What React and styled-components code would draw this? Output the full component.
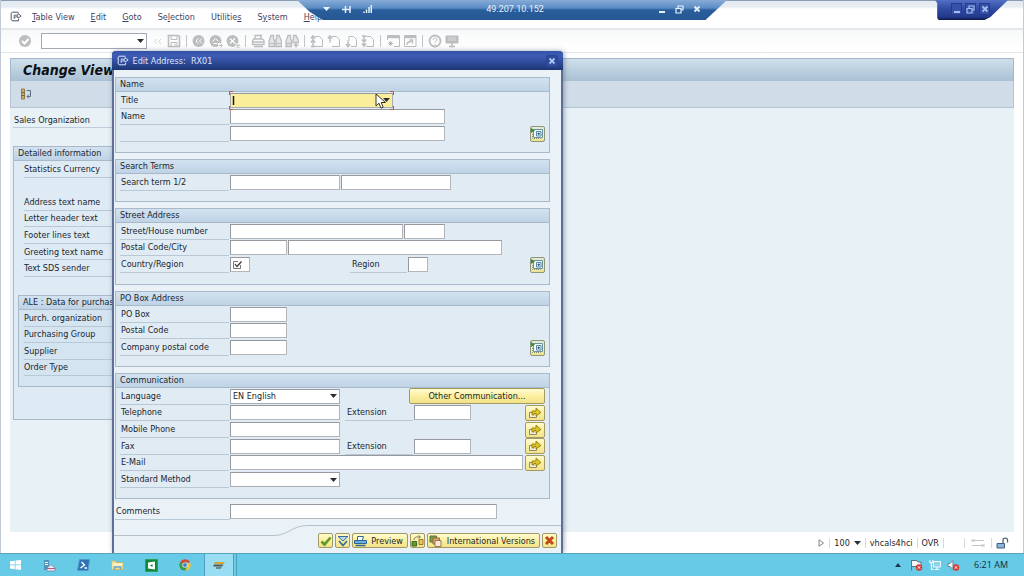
import React from "react";
import styled, { createGlobalStyle, css } from "styled-components";

const line = "#a9b9c9";
const ink = "#20262e";

const Global = createGlobalStyle`
  * { box-sizing: border-box; }
  body { margin: 0; background: #fff; }
  body, button, input, select {
    font-family: "DejaVu Sans Condensed", "DejaVu Sans", sans-serif;
    font-size: 9px;
    line-height: 12px;
    color: ${ink};
  }
  button { cursor: pointer; }
  svg { display: block; flex: none; }
`;

/* ---------- shell ---------- */
const Screen = styled.div`
  min-height: 100vh;
  display: flex;
  flex-direction: column;
`;
const Session = styled.div`
  position: relative;
  flex: 1;
  display: flex;
  flex-direction: column;
  overflow: hidden;
  border: solid #c3cbd6;
  border-width: 0 1px;
`;
const MenuBar = styled.nav`
  height: 30px;
  display: flex;
  align-items: center;
  gap: 16px;
  padding: 5px 9px 0;
  border-bottom: 2px solid #e3e9ea;
  background: linear-gradient(#8b9db3 0 1px, #e3e9f1 1px, #e8edf4 7px, #ffffff 9px);
`;
const MenuLink = styled.a`
  color: #3f4462;
  text-decoration: none;
`;
const MenuIcon = styled.button`
  display: flex;
  padding: 0;
  margin-right: -6px;
  border: 0;
  background: none;
`;
const ToolBar = styled.div`
  height: 23px;
  display: flex;
  align-items: center;
  gap: 3px;
  padding: 0 17px 1px;
  border-bottom: 1px solid #dfe5ea;
  background: linear-gradient(#f8f9fa, #ffffff);
`;
const ToolButton = styled.button`
  width: 14px;
  height: 14px;
  display: grid;
  place-items: center;
  padding: 0;
  border: 0;
  background: none;
  color: #bcbdbf;
`;
const ToolRule = styled.span`
  width: 1px;
  height: 12px;
  margin: 0 2px;
  background: #c2c5c9;
`;
const Command = styled.div`
  position: relative;
  width: 106px;
  margin: 0 0 0 6px;
`;
const CommandInput = styled.input`
  display: block;
  width: 100%;
  height: 16px;
  padding: 0 16px 0 3px;
  border: 1px solid #a3a9b2;
  background: #fff;
`;

/* ---------- background screen ---------- */
const View = styled.main`
  flex: 1;
  display: flex;
  flex-direction: column;
  margin: 5px 9px 0;
  background: #e8f1f5;
`;
const ViewTitle = styled.h1`
  height: 23px;
  margin: 0;
  padding-left: 12px;
  border: 1px solid #a3b8ca;
  border-bottom: 0;
  background: linear-gradient(#cfdfea, #a9c1d4);
  color: #0c1014;
  font-size: 14px;
  line-height: 22px;
  font-style: italic;
  font-weight: 700;
`;
const ViewTools = styled.div`
  height: 27px;
  display: flex;
  align-items: center;
  padding: 0 10px;
  border: 1px solid #b4c4d2;
  border-top: 0;
  background: #d0dce8;
`;
const ViewBody = styled.div`
  width: 420px;
  padding: 4px 3px;
`;
const ViewLabel = styled.div`
  display: flex;
  align-items: center;
  height: 16px;
  padding-left: 1px;
  border-bottom: 1px solid #bfcdd8;
`;
const DetailPanel = styled.section`
  min-height: 274px;
  margin-top: 18px;
  border: 1px solid ${line};
  background: #dfebf4;
`;
const AlePanel = styled.section`
  min-height: 92px;
  margin: 18px 5px 0 4px;
  border: 1px solid ${line};
  background: #d5e4f1;
`;

/* ---------- shared form parts ---------- */
const PanelTitle = styled.h2`
  height: 14px;
  margin: 0;
  padding: 0 4px;
  border-bottom: 1px solid ${line};
  background: linear-gradient(#d3e2f0, #bed3e6);
  font-size: 9px;
  line-height: 13px;
  font-weight: 400;
`;
const Rows = styled.div`
  display: grid;
  grid-auto-rows: 1fr;
  min-height: ${(p) => p.$height}px;
  padding: 0 4px;
`;
const Row = styled.div`
  display: flex;
  align-items: stretch;
  gap: 1px;
`;
const Label = styled.label`
  width: ${(p) => p.$width || 109}px;
  flex: none;
  display: flex;
  align-items: center;
  padding-left: ${(p) => (p.$width ? 2 : 1)}px;
  margin-left: ${(p) => p.$lead || 0}px;
  border-bottom: 1px solid #b9c8d5;
`;
const ViewField = styled.span`
  flex: 1;
  display: flex;
  align-items: center;
  margin-left: 6px;
  border-bottom: 1px solid #b9c8d5;
`;
const AleField = styled(ViewField)`
  margin-left: 1px;
`;
const Field = styled.input`
  width: ${(p) => p.$width}px;
  height: 15px;
  align-self: center;
  padding: 0 3px;
  border: 1px solid #b3b5ba;
  border-top-color: #96999f;
  border-left-color: #96999f;
  border-radius: 0;
  background: #fff;
`;
const Anchor = styled.div`
  position: relative;
  display: flex;
  align-items: center;
`;
const Picker = styled.select`
  width: ${(p) => p.$width}px;
  height: 15px;
  padding: 0 2px;
  appearance: none;
  border: 1px solid #a9abaf;
  border-top-color: #96999f;
  border-radius: 0;
  background: ${(p) => (p.$focused ? "#fbee9a" : "#fff")};
`;
const PickerArrow = styled.span`
  position: absolute;
  right: 3px;
  top: 0;
  bottom: 0;
  display: flex;
  align-items: center;
  pointer-events: none;
`;
const FieldMark = styled.span`
  position: absolute;
  left: 2px;
  pointer-events: none;
`;
const FocusFrame = styled.svg`
  position: absolute;
  left: -1px;
  top: -1px;
  pointer-events: none;
`;
const Pointer = styled.svg`
  position: absolute;
  left: 145px;
  top: 1px;
  z-index: 2;
  pointer-events: none;
`;

/* ---------- dialog ---------- */
const Dialog = styled.section`
  position: absolute;
  left: 111px;
  top: 51px;
  bottom: 0;
  width: 451px;
  display: flex;
  flex-direction: column;
  border: 2px solid #5d6f98;
  border-top: 0;
  border-bottom: 0;
  border-radius: 4px 4px 0 0;
  background: #eaf2f8;
  box-shadow: 1px 0 5px rgba(40, 60, 90, 0.45);
`;
const DialogBar = styled.header`
  height: 19px;
  flex: none;
  display: flex;
  align-items: center;
  gap: 1px;
  margin: 0 -2px;
  padding: 0 5px;
  border-radius: 4px 4px 0 0;
  background: linear-gradient(#3152a6, #3f5bb4 25%, #2f4b9c 60%, #1d3673);
  color: #dce6f7;
`;
const DialogName = styled.h2`
  flex: 1;
  margin: 0;
  font-size: 9px;
  font-weight: 400;
  white-space: pre;
`;
const CloseButton = styled.button`
  width: 12px;
  height: 12px;
  display: grid;
  place-items: center;
  padding: 0;
  border: 1px solid #2b4791;
  border-radius: 2px;
  background: #2f4b9b;
  color: #a9c3f5;
`;
const DialogBody = styled.div`
  flex: 1;
  display: flex;
  flex-direction: column;
  gap: 6px;
  padding: 7px 11px 0 1px;
`;
const Group = styled.fieldset`
  min-width: 0;
  min-height: ${(p) => p.$height}px;
  margin: 0;
  padding: 0;
  border: 1px solid ${line};
  background: #e0ebf3;
`;
const yellow = css`
  border: 1px solid #a39a63;
  border-radius: 2px;
  background: linear-gradient(#fffbd0, #fbefa0 50%, #f3e288);
`;
const MoreButton = styled.button`
  width: 15px;
  height: 16px;
  align-self: center;
  display: grid;
  place-items: center;
  margin-left: auto;
  padding: 0;
  border: 1px solid #8f9678;
  border-radius: 2px;
  background: linear-gradient(#dfe8d8, #eef0c4 60%, #efe28d);
`;
const DetailButton = styled.button`
  ${yellow}
  width: 20px;
  height: 16px;
  align-self: center;
  display: grid;
  place-items: center;
  margin-left: auto;
  padding: 0;
`;
const WideButton = styled.button`
  ${yellow}
  width: 136px;
  height: 16px;
  align-self: center;
  margin-left: auto;
  padding: 0;
`;
const Comments = styled.div`
  display: flex;
  min-height: 17px;
  margin-top: -2px;
`;
const CommentsLabel = styled(Label)`
  width: 115px;
  padding-left: 1px;
`;
const DialogFooter = styled.footer`
  position: relative;
  display: flex;
  justify-content: flex-end;
  align-items: flex-end;
  gap: 2px;
  height: 32px;
  padding: 0 4px 5px;
`;
const FooterCurve = styled.svg`
  position: absolute;
  left: 0;
  top: 4px;
  width: 100%;
  height: 12px;
`;
const FootButton = styled.button`
  ${yellow}
  position: relative;
  height: 15px;
  display: flex;
  align-items: center;
  justify-content: center;
  gap: 4px;
  padding: 0 ${(p) => (p.$text ? 4 : 0)}px 0 ${(p) => (p.$text ? 1 : 0)}px;
  min-width: 15px;
`;

/* ---------- overlays ---------- */
const RemoteBar = styled.div`
  position: absolute;
  top: 0;
  left: 50%;
  transform: translateX(-50%);
  width: 430px;
  height: 20px;
  display: flex;
  align-items: center;
  justify-content: space-between;
  padding: 0 26px 2px;
  background: linear-gradient(#86abd6, #5a8cc4 40%, #2a5e9c 50%, #255792);
  clip-path: polygon(0 0, 100% 0, 95% 100%, 6% 100%, 3% 60%);
  color: #e6f0fb;
`;
const RemoteHost = styled.span`
  font-family: Roboto, sans-serif;
`;
const RemoteSet = styled.div`
  display: flex;
  align-items: center;
  gap: ${(p) => p.$gap}px;
`;
const BareButton = styled.button`
  display: flex;
  padding: 0;
  border: 0;
  background: none;
  color: inherit;
`;
const WindowTab = styled.div`
  position: absolute;
  top: 0;
  right: 15px;
  width: 73px;
  height: 20px;
  display: flex;
  gap: 3px;
  padding: 3px 0 0 16px;
  background: linear-gradient(#5470c4, #2f4ba2 45%, #24398a 85%, #0c1646);
  clip-path: polygon(0 0, 100% 0, 76% 85%, 68% 100%, 5% 100%, 3% 90%, 3% 15%);
  color: #a8bdee;
`;
const TabButton = styled.button`
  width: 11px;
  height: 12px;
  display: grid;
  place-items: center;
  padding: 0;
  border: 1px solid #243c8c;
  background: #3551a8;
  color: inherit;
`;

/* ---------- bottom bars ---------- */
const StatusBar = styled.footer`
  height: 21px;
  display: flex;
  align-items: center;
  justify-content: flex-end;
  gap: 4px;
  padding: 0 14px;
  background: #fff;
`;
const StatusRule = styled.span`
  width: 1px;
  height: 10px;
  margin-left: ${(p) => p.$lead || 0}px;
  background: #d5d9dd;
`;
const TaskBar = styled.footer`
  height: 23px;
  display: flex;
  gap: 4px;
  border-top: 1px solid #55a5bf;
  background: #67cbe8;
`;
const TaskButton = styled.button`
  width: 30px;
  display: grid;
  place-items: center;
  padding: 0;
  border: solid ${(p) => (p.$active ? "#4f9fbd" : "transparent")};
  border-width: 0 1px;
  background: ${(p) => (p.$active ? "#98ddf1" : "transparent")};
`;
const TaskEdge = styled.span`
  width: 1px;
  margin-left: -2px;
  background: #4f9fbd;
`;
const Tray = styled.div`
  margin-left: auto;
  display: flex;
  align-items: center;
  gap: 6px;
  padding-right: 16px;
  color: #0d2a3a;
`;
const TrayIcons = styled.div`
  display: flex;
  gap: 6px;
  margin-left: 3px;
`;
const Clock = styled.time`
  margin-left: 8px;
  font-family: "Open Sans", "Noto Sans", sans-serif;
  font-size: 9px;
`;

/* ---------- icons ---------- */
const Ic = ({ children, w = 14, h = 14, ...rest }) => (
  <svg width={w} height={h} viewBox={`0 0 ${w} ${h}`} fill="none" stroke="currentColor" aria-hidden="true" {...rest}>
    {children}
  </svg>
);
const Down = ({ color = "#2a2f36" }) => (
  <Ic w={7} h={4} stroke="none" fill={color}><path d="M0 0h7L3.5 4z" /></Ic>
);
const WindowIcon = ({ color }) => (
  <Ic w={12} h={11} stroke={color}>
    <path d="M8.500 1.200H2.200L1.200 2.200v6.600l1 1H8.500V8" />
    <path d="M4.200 7.500V4.200H8V2.500L11.200 5 8 7.200V5.800H5.500z" strokeWidth=".9" />
  </Ic>
);
const CloseX = () => <Ic w={8} h={8} strokeWidth="1.800"><path d="M1.500 1.500l5 5M6.500 1.500l-5 5" /></Ic>;
const RestoreIc = () => <Ic w={9} h={9} strokeWidth="1.200"><path d="M3 3V1h5v4H6M1 3.500h5V8H1z" /></Ic>;
const MinIc = () => <Ic w={8} h={9} strokeWidth="1.800"><path d="M1 7h6" /></Ic>;

const disc = <circle cx="6.500" cy="7" r="6" fill="currentColor" stroke="none" />;
const page = "M5 2.500H9.500L12.500 5.500V12.500H5";
const tools = {
  save: <><path d="M1.500 1.500h10l1 1v10h-11z" strokeWidth="1.600" /><path d="M4 2v3.500h6V2M4 12V8.500h6V12M8 9.500v2" /></>,
  back: <>{disc}<path d="M6.500 4.500L4 7l2.500 2.500M10 4.500L7.500 7 10 9.500" stroke="#fff" /></>,
  exit: <>{disc}<path d="M3.500 7.500L6.500 4.500l3 3M4.500 9.500h4" stroke="#fff" /><path d="M9 9h5v5H9z" fill="#fff" stroke="none" /><path d="M9.500 11.500h3.500M11.500 9.500l2 2-2 2" /></>,
  cancel: <>{disc}<path d="M4 4.500l5 5M9 4.500l-5 5" stroke="#fff" strokeWidth="1.300" /><path d="M9.500 9.500h4.500V14H9.500z" fill="#fff" stroke="none" /><path d="M10.500 10.500l3 3M13.500 10.500l-3 3" strokeWidth="1.400" /></>,
  print: <><path d="M4 5V1.500h6.500L9.500 5M1.500 10.500v-4l1.500-1.500h8.500l1.500 1.500v4z" strokeWidth="1.300" /><path d="M1.500 8h11.500M3 12.500h9" strokeWidth="1.300" /></>,
  find: <><path d="M3 1.500h2.500v3l1 2V12.500H1V7zM8.500 1.500H11l2.500 5.500v5.500H8V6.500l.5-2z" fill="currentColor" fillOpacity=".35" strokeWidth="1.300" /><path d="M6 6.500h2M1 9.500h5.500M8 9.500h5.500" /></>,
  findNext: <><path d="M3 1.500h2.500v3l1 2V12.500H1V7zM8.500 1.500H11l2.500 5v2H8v-2l.5-2z" fill="currentColor" fillOpacity=".35" strokeWidth="1.300" /><path d="M1 9.500h5.500M11 8.500v5M8.500 11h5" strokeWidth="1.600" /></>,
  first: <><path d={page} /><path d="M3 2v10.500M.8 4.500L3 2l2.200 2.500M.8 8.500L3 6l2.200 2.500M1 12.500h4" strokeWidth="1.500" /></>,
  prev: <><path d={page} /><path d="M3 8.500V2M.8 4.500L3 2l2.200 2.500" strokeWidth="1.500" /></>,
  next: <><path d="M5 7V2.500H9.500L12.500 5.500V12.500H7" /><path d="M4 6.500v6M1.800 10L4 12.500 6.200 10" strokeWidth="1.500" /></>,
  last: <><path d={page} /><path d="M3 1.500V12M.8 5.500L3 8l2.200-2.500M.8 9.500L3 12l2.200-2.500M1 2h4" strokeWidth="1.500" /></>,
  session: <><path d="M1.500 6V1.500h12v11H8" /><path d="M1.500 3h12" strokeWidth="2.400" /><path d="M4.500 7v5M2 9.500h5M2.800 7.800l3.400 3.400M6.200 7.800l-3.400 3.400" /></>,
  shortcut: <><path d="M1.500 1.500h11.500v11H1.500z" /><path d="M1.500 3h11.500" strokeWidth="2.400" /><path d="M4 11c0-3 1.500-3.500 4.500-3.500M6.500 6h3v3.500" strokeWidth="1.400" /></>,
  help: <><circle cx="7" cy="7" r="5.500" strokeWidth="1.800" /><path d="M5 5.800c0-2.300 4-2.300 4 0C9 7 7 7 7 8.500M7 9.800v1.200" /></>,
  layout: <><path d="M1 2h12v7H1z" fill="currentColor" /><path d="M3 4h8M3 6h8" stroke="#dcdcdc" /><path d="M7 9v3M4 12.500h6" strokeWidth="1.600" /></>,
};
const toolSets = [["save"], ["back", "exit", "cancel"], ["print", "find", "findNext"], ["first", "prev", "next", "last"], ["session", "shortcut"], ["help", "layout"]];

const MoreIc = () => (
  <Ic w={13} h={13}>
    <path d="M2.500 2.500h9v8h-9z" stroke="#6b959b" fill="#eef6f6" />
    <path d="M5.500 4.500h4.500v4.500H5.500z" stroke="#5b88ab" />
    <path d="M7.700 5.500v2.500M6.500 6.700h2.500" stroke="#2d5a84" />
    <path d="M0 1l4 2.500L0 6z" fill="#3f8a35" stroke="none" />
    <path d="M1.500 7v4.500h8" stroke="#7c8f74" strokeDasharray="1 1" />
  </Ic>
);
const DetailIc = () => (
  <Ic w={14} h={12}>
    <path d="M1.500 5.500h7v5h-7z" stroke="#8f8a6a" fill="#f3efd6" />
    <path d="M4 8V4h4V1l5 4.500L8 9V6.500H6V8z" stroke="#857512" strokeWidth=".8" fill="#dfc522" />
  </Ic>
);

/* ---------- pieces ---------- */
const DropDown = ({ id, width, value = "", focused, children }) => (
  <Anchor>
    <Picker id={id} $width={width} $focused={focused} defaultValue={value}>
      <option>{value}</option>
    </Picker>
    <PickerArrow><Down /></PickerArrow>
    {children}
  </Anchor>
);
const More = ({ name }) => <MoreButton type="button" aria-label={name}><MoreIc /></MoreButton>;
const Detail = ({ name }) => <DetailButton type="button" aria-label={name}><DetailIc /></DetailButton>;

const menus = ["Table View", "Edit", "Goto", "Selection", "Utilities", "System", "Help"];
const accel = [0, 0, 0, 2, 8, 1, 0];

const AddressDialog = () => (
  <Dialog aria-labelledby="dlg">
    <DialogBar>
      <WindowIcon color="#dce6f7" />
      <DialogName id="dlg">{" Edit Address:  RX01"}</DialogName>
      <CloseButton type="button" aria-label="Close"><CloseX /></CloseButton>
    </DialogBar>
    <DialogBody>
      <Group $height={76}>
        <PanelTitle>Name</PanelTitle>
        <Rows $height={50}>
          <Row>
            <Label htmlFor="title">Title</Label>
            <DropDown id="title" width={163} focused>
              <FocusFrame width="165" height="19" fill="none" stroke="#b5564c">
                <path d="M.5 4V.5H4M161 .5h3.500V4M.5 15v3.500H4M161 18.500h3.500V15" />
                <path d="M4.500 5v9" stroke="#1c1c1c" strokeWidth="1.500" />
              </FocusFrame>
              <Pointer width="12" height="17" viewBox="0 0 12 17">
                <path d="M1 1v12l3-2.800 2 5 2.200-1-2-4.700H10.500z" fill="#fff" stroke="#3a3428" />
              </Pointer>
            </DropDown>
          </Row>
          <Row>
            <Label htmlFor="name1">Name</Label>
            <Field id="name1" $width={215} />
          </Row>
          <Row>
            <Label htmlFor="name2" />
            <Field id="name2" aria-label="Name 2" $width={215} />
            <More name="More names" />
          </Row>
        </Rows>
      </Group>

      <Group $height={43}>
        <PanelTitle>Search Terms</PanelTitle>
        <Rows $height={17}>
          <Row>
            <Label htmlFor="term1">Search term 1/2</Label>
            <Field id="term1" $width={110} />
            <Field aria-label="Search term 2" $width={110} />
          </Row>
        </Rows>
      </Group>

      <Group $height={77}>
        <PanelTitle>Street Address</PanelTitle>
        <Rows $height={50}>
          <Row>
            <Label htmlFor="street">Street/House number</Label>
            <Field id="street" $width={173} />
            <Field aria-label="House number" $width={41} />
          </Row>
          <Row>
            <Label htmlFor="zip">Postal Code/City</Label>
            <Field id="zip" $width={57} />
            <Field aria-label="City" $width={214} />
          </Row>
          <Row>
            <Label htmlFor="country">Country/Region</Label>
            <Anchor>
              <Field id="country" $width={20} />
              <FieldMark>
                <Ic w={11} h={10}><path d="M8.500 5v3.500h-7v-7H6" stroke="#777" /><path d="M3 4l2 2.500L9.500 1.500" stroke="#333" strokeWidth="1.200" /></Ic>
              </FieldMark>
            </Anchor>
            <Label htmlFor="region" $width={57} $lead={99}>Region</Label>
            <Field id="region" $width={20} />
            <More name="More address fields" />
          </Row>
        </Rows>
      </Group>

      <Group $height={76}>
        <PanelTitle>PO Box Address</PanelTitle>
        <Rows $height={50}>
          <Row><Label htmlFor="pobox">PO Box</Label><Field id="pobox" $width={57} /></Row>
          <Row><Label htmlFor="pozip">Postal Code</Label><Field id="pozip" $width={57} /></Row>
          <Row>
            <Label htmlFor="cozip">Company postal code</Label>
            <Field id="cozip" $width={57} />
            <More name="More PO box fields" />
          </Row>
        </Rows>
      </Group>

      <Group $height={126}>
        <PanelTitle>Communication</PanelTitle>
        <Rows $height={100}>
          <Row>
            <Label htmlFor="lang">Language</Label>
            <DropDown id="lang" width={110} value="EN English" />
            <WideButton type="button">Other Communication...</WideButton>
          </Row>
          <Row>
            <Label htmlFor="tel">Telephone</Label>
            <Field id="tel" $width={110} />
            <Label htmlFor="telext" $width={68} $lead={4}>Extension</Label>
            <Field id="telext" $width={57} />
            <Detail name="More telephone numbers" />
          </Row>
          <Row>
            <Label htmlFor="mob">Mobile Phone</Label>
            <Field id="mob" $width={110} />
            <Detail name="More mobile numbers" />
          </Row>
          <Row>
            <Label htmlFor="fax">Fax</Label>
            <Field id="fax" $width={110} />
            <Label htmlFor="faxext" $width={68} $lead={4}>Extension</Label>
            <Field id="faxext" $width={57} />
            <Detail name="More fax numbers" />
          </Row>
          <Row>
            <Label htmlFor="mail">E-Mail</Label>
            <Field id="mail" $width={293} />
            <Detail name="More e-mail addresses" />
          </Row>
          <Row>
            <Label htmlFor="method">Standard Method</Label>
            <DropDown id="method" width={110} />
          </Row>
        </Rows>
      </Group>

      <Comments>
        <CommentsLabel htmlFor="comments">Comments</CommentsLabel>
        <Field id="comments" $width={267} />
      </Comments>
    </DialogBody>
    <DialogFooter>
      <FooterCurve viewBox="0 0 447 12" preserveAspectRatio="none" fill="none" stroke="#b5c1ca">
        <path d="M0 10.500H160C174 10.500 178 .5 194 .5H447" />
      </FooterCurve>
      <FootButton type="button" aria-label="Continue">
        <Ic w={12} h={12}><path d="M1.500 6.500L4.500 9.500 10.500 2.500" stroke="#5c9a2a" strokeWidth="2.600" /></Ic>
      </FootButton>
      <FootButton type="button" aria-label="Check">
        <Ic w={12} h={12} stroke="#3a6f9c" fill="#b4d8ec"><path d="M1 1.500h10L6 6z" /><path d="M2 6L6 10.500 10 6" fill="none" strokeWidth="1.800" /></Ic>
      </FootButton>
      <FootButton type="button" $text>
        <Ic w={13} h={12} stroke="#2f6797"><path d="M3.500 5V1.500h6L8.500 5" fill="#fff" /><path d="M.5 5.500h12v3H.5z" fill="#6bb0dc" /><path d="M1.500 10.500h10" strokeWidth="1.500" /></Ic>
        Preview
      </FootButton>
      <FootButton type="button" aria-label="Change relationships">
        <Ic w={13} h={12}><path d="M1 6.500h4.500v4.500H1z" fill="#5d9a2f" stroke="#3f6b22" /><path d="M8 4.500h4v5H8z" fill="#ecc76a" stroke="#9b7a2c" /><path d="M3 5c0-3 3-3.500 6-3M7.500.5l2 1.500-2 1.500" stroke="#77775a" /></Ic>
      </FootButton>
      <FootButton type="button" $text>
        <Ic w={14} h={12}><path d="M1 1h6.500v6H1z" fill="#7c9e4a" stroke="#55733a" /><path d="M4 3h6.500v6H4z" fill="#e0a86a" stroke="#9a6a3c" /><path d="M6 5.500h6v6H6z" fill="#f7ecd9" stroke="#a5764c" /></Ic>
        International Versions
      </FootButton>
      <FootButton type="button" aria-label="Cancel">
        <Ic w={11} h={11}><path d="M2 2l7 7M9 2L2 9" stroke="#bf4a1c" strokeWidth="3" /></Ic>
      </FootButton>
    </DialogFooter>
  </Dialog>
);

export default function App() {
  return (
    <Screen>
      <Global />
      <Session>
        <MenuBar>
          <MenuIcon type="button" aria-label="System menu"><WindowIcon color="#4c5468" /></MenuIcon>
          {menus.map((m, i) => (
            <MenuLink href="#" key={m}>
              {m.slice(0, accel[i])}<u>{m[accel[i]]}</u>{m.slice(accel[i] + 1)}
            </MenuLink>
          ))}
        </MenuBar>
        <ToolBar>
          <ToolButton type="button" aria-label="Enter">
            <Ic><circle cx="7" cy="7" r="6" fill="currentColor" stroke="none" /><path d="M4 7l2.500 2.500L10.500 5" stroke="#fff" strokeWidth="2" /></Ic>
          </ToolButton>
          <Command>
            <CommandInput aria-label="Command" />
            <PickerArrow><Down /></PickerArrow>
          </Command>
          <ToolButton type="button" aria-label="Collapse">
            <Ic><path d="M7 5L4.500 7.500 7 10M11 5L8.500 7.500 11 10" stroke="#d3d5d8" /></Ic>
          </ToolButton>
          {toolSets.map((set, i) => (
            <React.Fragment key={i}>
              {i > 0 && <ToolRule />}
              {set.map((t) => (
                <ToolButton type="button" key={t} aria-label={t}><Ic>{tools[t]}</Ic></ToolButton>
              ))}
            </React.Fragment>
          ))}
        </ToolBar>

        <View>
          <ViewTitle>Change View</ViewTitle>
          <ViewTools>
            <BareButton type="button" aria-label="Other view">
              <Ic w={11} h={12}><path d="M.5 1h3v10h-3z" fill="#d9a85a" stroke="#8b7a4c" /><path d="M.5 4.500h3M.5 7.500h3" stroke="#5c6b4c" /><path d="M5.500 2.500h4v6H6M8 6.500L6 8.500l2 2" stroke="#5c6f86" /></Ic>
            </BareButton>
          </ViewTools>
          <ViewBody>
            <ViewLabel>Sales Organization</ViewLabel>
            <DetailPanel>
              <PanelTitle>Detailed information</PanelTitle>
              <Rows $height={116}>
                {["Statistics Currency", null, "Address text name", "Letter header text", "Footer lines text", "Greeting text name", "Text SDS sender"].map((t, i) => (
                  <Row key={i}>{t && <ViewField>{t}</ViewField>}</Row>
                ))}
              </Rows>
              <AlePanel>
                <PanelTitle>ALE : Data for purchasing</PanelTitle>
                <Rows $height={66}>
                  {["Purch. organization", "Purchasing Group", "Supplier", "Order Type"].map((t) => (
                    <Row key={t}><AleField>{t}</AleField></Row>
                  ))}
                </Rows>
              </AlePanel>
            </DetailPanel>
          </ViewBody>
        </View>

        <StatusBar>
          <Ic w={7} h={8}><path d="M1 .8v6.400L5.500 4z" stroke="#7d858e" /></Ic>
          <StatusRule />
          <span>100</span>
          <Down />
          <StatusRule />
          <span>vhcals4hci</span>
          <StatusRule />
          <span>OVR</span>
          <StatusRule />
          <StatusRule $lead={16} />
          <Ic w={18} h={10}><path d="M3 1v3M3 2.500h12M5.500 1L4 2.500 5.500 4M3 7.500h12M15 6v3M12.500 6L14 7.500 12.500 9" stroke="#c3c7cb" /></Ic>
          <StatusRule />
          <Ic w={13} h={12}><path d="M1 6.500h7.500v4.500H1z" fill="#8db4d6" stroke="#3c5e84" /><path d="M7 6V3c0-2.500 4.500-2.500 4.500 0v2.500" stroke="#57636f" strokeWidth="1.300" /></Ic>
        </StatusBar>

        <AddressDialog />

        <RemoteBar>
          <RemoteSet $gap={12}>
            <BareButton type="button" aria-label="Menu"><Down color="#eef5fd" /></BareButton>
            <BareButton type="button" aria-label="Pin"><Ic w={9} h={9} strokeWidth="1.500"><path d="M0 4.500h3M3.500 1v7M8 1v7M3.500 4.500h4.500" /></Ic></BareButton>
            <Ic w={9} h={10} strokeWidth="1.500"><path d="M1 7.500V9M3.500 5.500V9M6 3v6M8.300 1v8" /></Ic>
          </RemoteSet>
          <RemoteHost>49.207.10.152</RemoteHost>
          <RemoteSet $gap={9}>
            <BareButton type="button" aria-label="Minimize session"><MinIc /></BareButton>
            <BareButton type="button" aria-label="Restore session"><RestoreIc /></BareButton>
            <BareButton type="button" aria-label="Close session"><CloseX /></BareButton>
          </RemoteSet>
        </RemoteBar>
        <WindowTab>
          <TabButton type="button" aria-label="Minimize"><MinIc /></TabButton>
          <TabButton type="button" aria-label="Restore"><RestoreIc /></TabButton>
          <TabButton type="button" aria-label="Close window"><CloseX /></TabButton>
        </WindowTab>
      </Session>

      <TaskBar>
        <TaskButton type="button" aria-label="Start">
          <Ic w={11} h={10} stroke="none" fill="#fff"><path d="M0 1.300L4.800.7v3.900H0zM5.500.6L11 0v4.600H5.500zM0 5.300h4.800v3.900L0 8.600zM5.500 5.300H11V10l-5.500-.7z" /></Ic>
        </TaskButton>
        <TaskButton type="button" aria-label="Server Manager">
          <Ic w={13} h={13}><path d="M1 1h5v10H1z" fill="#4c94b8" stroke="none" /><path d="M2 3.500h3M2 5.500h3" stroke="#fff" /><path d="M4 9l4-3.500L12 9v3H4z" fill="#e9eef5" stroke="#8293ab" /><path d="M4 9.500h8" stroke="#b8577a" /></Ic>
        </TaskButton>
        <TaskButton type="button" aria-label="PowerShell">
          <Ic w={13} h={12}><path d="M2.500.5h10L11 11.500H.5z" fill="#2c74b5" stroke="#5197ce" /><path d="M4.500 3L7.500 6 3.500 9M7.500 9h2.500" stroke="#fff" strokeWidth="1.400" /></Ic>
        </TaskButton>
        <TaskButton type="button" aria-label="File Explorer">
          <Ic w={13} h={12}><path d="M.5 2h4l1 1.500h6.500v7H.5z" fill="#efe09a" stroke="#cdb86a" /><path d="M2 5.500h9.500" stroke="#fff8d8" strokeWidth="2" /><path d="M3.500 10.500V8h6v2.500" stroke="#6fa7c4" strokeWidth="1.600" /></Ic>
        </TaskButton>
        <TaskButton type="button" aria-label="Store">
          <Ic w={13} h={13}><path d="M.5.500h12v12H.5z" fill="#0e8a3c" stroke="#2f9f58" /><path d="M3 3.500l7-1v8l-7-1z" fill="#fff" stroke="none" /><path d="M7.500 5L5 6.500 7.500 8z" fill="#0e8a3c" stroke="none" /></Ic>
        </TaskButton>
        <TaskButton type="button" aria-label="Chrome">
          <Ic w={12} h={12} stroke="none">
            <path d="M6 6L1 3.200A5.800 5.800 0 0 1 11.200 3.500H6z" fill="#d64a3a" /><path d="M6 6l5.200-2.500A5.800 5.800 0 0 1 6 11.800L8.500 7z" fill="#efc438" /><path d="M6 6l2 2-2 3.800A5.800 5.800 0 0 1 1 3.200z" fill="#3b9b50" />
            <circle cx="6" cy="6" r="2.600" fill="#fff" /><circle cx="6" cy="6" r="2" fill="#4a7fd0" />
          </Ic>
        </TaskButton>
        <TaskButton type="button" aria-label="SAP Logon" $active>
          <Ic w={12} h={7} stroke="none"><path d="M2 0h10l-1.500 2H1z" fill="#d9a42c" /><path d="M1 2.500h9.500L9 4.500H0z" fill="#4f5b50" /><path d="M3 5h6L7.500 7H3z" fill="#6f8a86" /></Ic>
        </TaskButton>
        <TaskEdge />
        <Tray>
          <Ic w={6} h={4} stroke="none" fill="#17384a"><path d="M3 0l3 4H0z" /></Ic>
          <TrayIcons>
            <Ic w={13} h={12}><path d="M1.500 11.500V1M2 1.500h5l1 1.500h3v4.500H2" fill="#f2f8fb" stroke="#5b7480" /><circle cx="9" cy="8.500" r="3.200" fill="#d33b32" stroke="none" /><path d="M7.800 7.300l2.400 2.400M10.200 7.300L7.800 9.700" stroke="#fff" /></Ic>
            <Ic w={12} h={12}><path d="M4.500 2.500h7v5.500h-7z" fill="#8fd3ea" stroke="#f2f8fb" /><path d="M8 8v2.500M5.500 10.500h5M2.500 5v5.500h2M.8 1v2.500h3V1M2.300 3.500V6" stroke="#f2f8fb" strokeWidth="1.200" /></Ic>
            <Ic w={13} h={12}><path d="M1 4.500h2L6 1.500v9l-3-3H1z" fill="#f2f8fb" stroke="#6b8490" /><circle cx="9" cy="8.500" r="3.200" fill="#d33b32" stroke="none" /><path d="M7.800 7.300l2.400 2.400M10.200 7.300L7.800 9.700" stroke="#fff" /></Ic>
          </TrayIcons>
          <Clock>6:21 AM</Clock>
        </Tray>
      </TaskBar>
    </Screen>
  );
}
